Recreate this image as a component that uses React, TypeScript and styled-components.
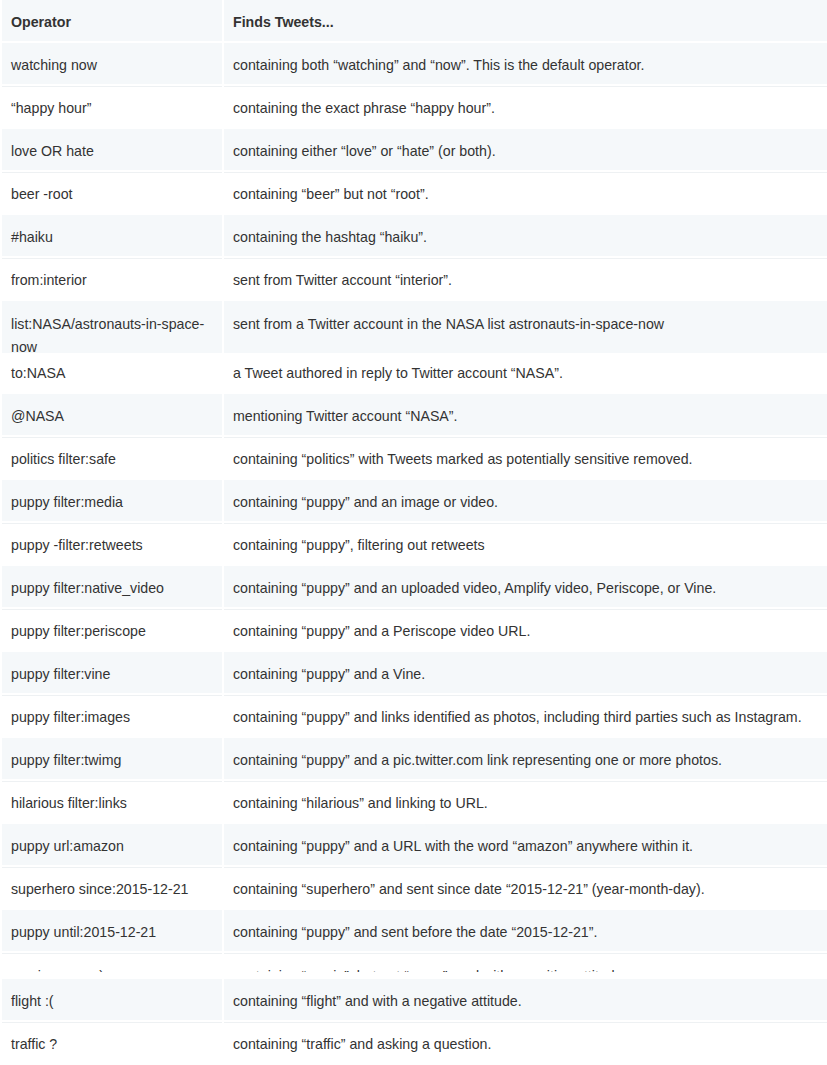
import React from "react";
import styled, { createGlobalStyle } from "styled-components";

const GlobalStyle = createGlobalStyle`
  html, body {
    margin: 0;
    padding: 0;
    background: #ffffff;
    overflow: hidden;
  }
  body {
    font-family: "Liberation Sans", Arial, Helvetica, sans-serif;
    color: #333333;
    font-size: 14.2px;
  }
`;

const Table = styled.div`
  display: flex;
  flex-direction: column;
  gap: 2px;
  padding-left: 2px;
  width: 100%;
  box-sizing: border-box;
`;

const Row = styled.div<{ $tall?: boolean }>`
  display: grid;
  grid-template-columns: 220px 1fr;
  column-gap: 2px;
  position: relative;
  z-index: ${(p) => (p.$tall ? 1 : 0)};
  margin-bottom: ${(p) => (p.$tall ? "-4px" : "0")};
`;

const Cell = styled.div<{ $shade?: boolean; $head?: boolean; $tall?: boolean; $clip?: boolean }>`
  box-sizing: border-box;
  height: ${(p) => (p.$clip ? "24px" : p.$tall ? "52px" : "41px")};
  padding: ${(p) => (p.$clip ? "0 9px" : p.$tall ? "11px 9px 0" : "2px 9px 0")};
  display: flex;
  align-items: ${(p) => (p.$clip || p.$tall ? "flex-start" : "center")};
  overflow: hidden;
  border-top: 1px solid ${(p) => (p.$shade ? "#f5f8fa" : "#eef1f3")};
  background: ${(p) => (p.$shade ? "#f5f8fa" : "#ffffff")};
  font-weight: ${(p) => (p.$head ? 700 : 400)};
  line-height: ${(p) => (p.$tall ? "23px" : "24px")};
  color: #333333;
`;

const ClipWindow = styled.div`
  height: 18px;
  overflow: hidden;
`;

const ClipText = styled.div`
  padding-top: 10px;
  line-height: 24px;
  white-space: nowrap;
`;

type Item = { op: string; desc: string; tall?: boolean; clip?: boolean };

const rows: Item[] = [
  { op: "watching now", desc: "containing both “watching” and “now”. This is the default operator." },
  { op: "“happy hour”", desc: "containing the exact phrase “happy hour”." },
  { op: "love OR hate", desc: "containing either “love” or “hate” (or both)." },
  { op: "beer -root", desc: "containing “beer” but not “root”." },
  { op: "#haiku", desc: "containing the hashtag “haiku”." },
  { op: "from:interior", desc: "sent from Twitter account “interior”." },
  { op: "list:NASA/astronauts-in-space-now", desc: "sent from a Twitter account in the NASA list astronauts-in-space-now", tall: true },
  { op: "to:NASA", desc: "a Tweet authored in reply to Twitter account “NASA”." },
  { op: "@NASA", desc: "mentioning Twitter account “NASA”." },
  { op: "politics filter:safe", desc: "containing “politics” with Tweets marked as potentially sensitive removed." },
  { op: "puppy filter:media", desc: "containing “puppy” and an image or video." },
  { op: "puppy -filter:retweets", desc: "containing “puppy”, filtering out retweets" },
  { op: "puppy filter:native_video", desc: "containing “puppy” and an uploaded video, Amplify video, Periscope, or Vine." },
  { op: "puppy filter:periscope", desc: "containing “puppy” and a Periscope video URL." },
  { op: "puppy filter:vine", desc: "containing “puppy” and a Vine." },
  { op: "puppy filter:images", desc: "containing “puppy” and links identified as photos, including third parties such as Instagram." },
  { op: "puppy filter:twimg", desc: "containing “puppy” and a pic.twitter.com link representing one or more photos." },
  { op: "hilarious filter:links", desc: "containing “hilarious” and linking to URL." },
  { op: "puppy url:amazon", desc: "containing “puppy” and a URL with the word “amazon” anywhere within it." },
  { op: "superhero since:2015-12-21", desc: "containing “superhero” and sent since date “2015-12-21” (year-month-day)." },
  { op: "puppy until:2015-12-21", desc: "containing “puppy” and sent before the date “2015-12-21”." },
  { op: "movie -scary :)", desc: "containing “movie”, but not “scary”, and with a positive attitude.", clip: true },
  { op: "flight :(", desc: "containing “flight” and with a negative attitude." },
  { op: "traffic ?", desc: "containing “traffic” and asking a question." },
];

export default function App() {
  return (
    <>
      <GlobalStyle />
      <Table>
        <Row>
          <Cell $shade $head>Operator</Cell>
          <Cell $shade $head>Finds Tweets...</Cell>
        </Row>
        {rows.map((r, i) => {
          const shade = i % 2 === 0;
          if (r.clip) {
            return (
              <Row key={i}>
                <Cell $shade={shade} $clip>
                  <ClipWindow>
                    <ClipText>{r.op}</ClipText>
                  </ClipWindow>
                </Cell>
                <Cell $shade={shade} $clip>
                  <ClipWindow>
                    <ClipText>{r.desc}</ClipText>
                  </ClipWindow>
                </Cell>
              </Row>
            );
          }
          return (
            <Row key={i} $tall={r.tall}>
              <Cell $shade={shade} $tall={r.tall}>
                <span>{r.op}</span>
              </Cell>
              <Cell $shade={shade} $tall={r.tall}>
                <span>{r.desc}</span>
              </Cell>
            </Row>
          );
        })}
      </Table>
    </>
  );
}
